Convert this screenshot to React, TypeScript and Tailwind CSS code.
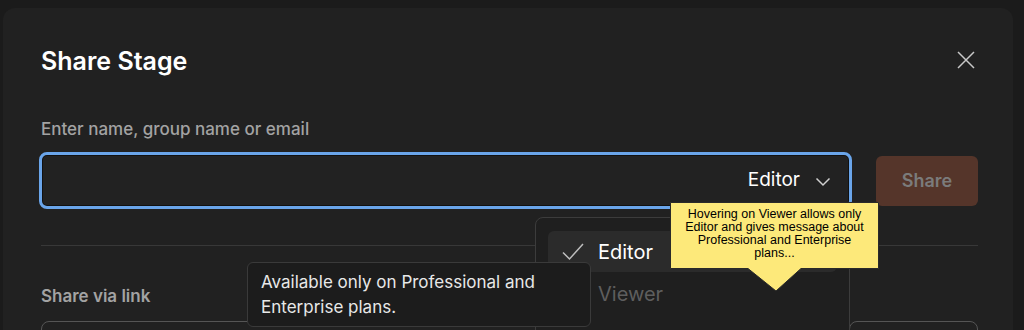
import React from "react";

const font = { fontFamily: "Inter, 'Noto Sans', sans-serif" };

function CloseIcon() {
  return (
    <svg width="18" height="18" viewBox="0 0 18 18" fill="none" stroke="#c8c8c8" strokeWidth="1.5">
      <path d="M1 1 L17 17 M17 1 L1 17" />
    </svg>
  );
}

function Chevron() {
  return (
    <svg width="16" height="10" viewBox="0 0 16 10" fill="none" stroke="#d0d0d0" strokeWidth="1.5">
      <path d="M1.5 1.5 L8 8 L14.5 1.5" />
    </svg>
  );
}

function Check() {
  return (
    <svg width="22" height="18" viewBox="0 0 22 18" fill="none" stroke="#bdbdbd" strokeWidth="1.5">
      <path d="M1 9.5 L7.5 16 L21 1" />
    </svg>
  );
}

export default function App() {
  return (
    <div className="h-[330px] overflow-hidden bg-[#1b1b1b]" style={font}>
      <div className="relative ml-[3px] mt-2 h-[340px] w-[1010px] rounded-xl bg-[#212121] pl-[38px] pr-[35px] pt-[37px]">
        <div className="flex items-center justify-between">
          <h1 className="text-[25px] leading-8 font-semibold text-white">Share Stage</h1>
          <div className="mr-[3px] mt-[-2px]">
            <CloseIcon />
          </div>
        </div>

        <div className="mt-10 text-[17px] leading-6 font-medium text-[#a3a3a3]">
          Enter name, group name or email
        </div>

        <div className="mt-[11px] flex items-center gap-6">
          <div className="ml-[-2px] flex h-[57px] flex-1 items-center justify-end rounded-lg border-[3px] border-[#6aa5ea] bg-[#222] pr-[18px] shadow-[inset_0_0_0_1px_#111]">
            <span className="text-[19px] text-white">Editor</span>
            <span className="ml-[15px] mt-[2px]">
              <Chevron />
            </span>
          </div>
          <button className="h-[50px] w-[102px] rounded-md bg-[#55352a] text-[18px] font-semibold text-[#7b7b7b]">
            Share
          </button>
        </div>

        <div className="mt-9 border-t border-[#383838]" />

        <div className="mt-[38px] text-[17px] leading-6 font-semibold text-[#a3a3a3]">Share via link</div>

        <div className="mt-[13px] flex gap-[14px]">
          <div className="h-12 flex-1 rounded-lg border border-[#555]" />
          <div className="h-12 w-[129px] rounded-lg border border-[#555]" />
        </div>

        {/* role dropdown */}
        <div className="absolute left-[532px] top-[209px] h-[140px] w-[315px] rounded-lg border border-[#3c3c3c] bg-[#1f1f1f] px-3 pt-[13px]">
          <div className="flex h-[41px] items-center rounded-md bg-[#2b2b2b] pl-[14px]">
            <Check />
            <span className="ml-[14px] text-[20px] text-white">Editor</span>
          </div>
          <div className="flex h-[44px] items-center pl-[50px]">
            <span className="text-[20px] text-[#5e5e5e]">Viewer</span>
          </div>
        </div>

        {/* upgrade tooltip */}
        <div className="absolute left-[244px] top-[254px] h-[65px] w-[344px] rounded-md border border-[#3a3a3a] bg-[#1c1c1c] px-[13px] pt-[7px] text-[17px] leading-[25px] text-[#e8e8e8]">
          Available only on Professional and
          <br />
          Enterprise plans.
        </div>

        {/* annotation callout */}
        <div className="absolute left-[667px] top-[194px] h-[90px] w-[209px]">
          <svg className="absolute inset-0" width="209" height="90" viewBox="0 0 209 90">
            <path
              d="M0.5 0.5 H208.5 V66.5 H131 L106 89 L78 66.5 H0.5 Z"
              fill="#fde97a"
              stroke="#2a2a2a"
              strokeWidth="1"
            />
          </svg>
          <div
            className="relative pt-[6px] text-center text-[12.5px] leading-[13px] text-black"
            style={{ fontFamily: "'Liberation Sans', Arial, sans-serif" }}
          >
            Hovering on Viewer allows only
            <br />
            Editor and gives message about
            <br />
            Professional and Enterprise
            <br />
            plans...
          </div>
        </div>
      </div>
    </div>
  );
}
